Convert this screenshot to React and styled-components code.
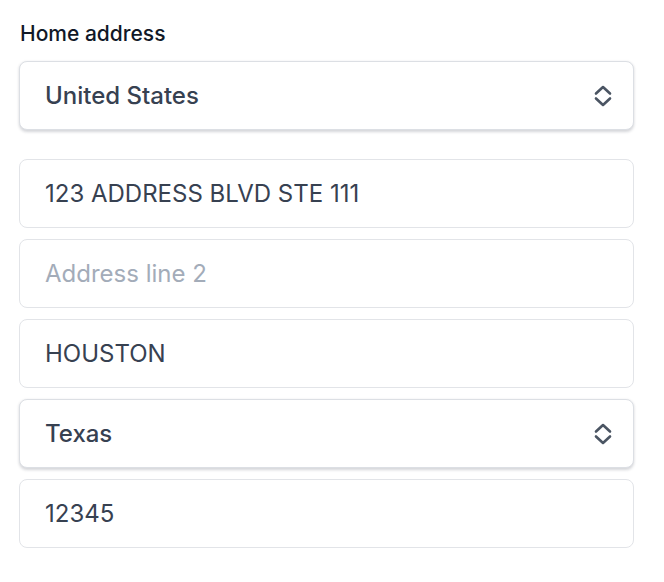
import styled, { createGlobalStyle } from 'styled-components';

const GlobalStyle = createGlobalStyle`
  body {
    margin: 0;
    background: #ffffff;
    font-family: Inter, "Noto Sans", "Liberation Sans", sans-serif;
  }
`;

function ChevronUpDown() {
  return (
    <svg width="18" height="22" viewBox="0 0 18 22" fill="none" stroke="#4b5563" strokeWidth="2.6" strokeLinecap="round" strokeLinejoin="round">
      <path d="M2 8.5 L9 2 L16 8.5" />
      <path d="M2 13.5 L9 20 L16 13.5" />
    </svg>
  );
}

function App() {
  return (
    <>
      <GlobalStyle />
      <Form>
        <Label>Home address</Label>
        <SelectWrap>
          <Select defaultValue="US">
            <option value="US">United States</option>
            <option value="CA">Canada</option>
          </Select>
          <Chevron>
            <ChevronUpDown />
          </Chevron>
        </SelectWrap>
        <Fields>
          <Input defaultValue="123 ADDRESS BLVD STE 111" />
          <Input placeholder="Address line 2" />
          <Input defaultValue="HOUSTON" />
          <SelectWrap>
            <Select defaultValue="TX">
              <option value="TX">Texas</option>
              <option value="CA">California</option>
            </Select>
            <Chevron>
              <ChevronUpDown />
            </Chevron>
          </SelectWrap>
          <Input defaultValue="12345" />
        </Fields>
      </Form>
    </>
  );
}

const Form = styled.div`
  width: 615px;
  padding: 20px 0 0 19px;
  display: flex;
  flex-direction: column;
`;

const Label = styled.label`
  font-size: 21px;
  font-weight: 500;
  color: #111827;
  line-height: 28px;
  margin-bottom: 13px;
  padding-left: 1px;
`;

const Fields = styled.div`
  display: flex;
  flex-direction: column;
  gap: 11px;
  margin-top: 29px;
`;

const SelectWrap = styled.div`
  position: relative;
  width: 100%;
`;

const Select = styled.select`
  appearance: none;
  -webkit-appearance: none;
  width: 100%;
  height: 69px;
  box-sizing: border-box;
  padding: 0 60px 0 25px;
  border: 1.5px solid #dcdfe4;
  border-radius: 8px;
  background: #ffffff;
  box-shadow: 0 1.5px 3px rgba(15, 23, 42, 0.18);
  font-family: inherit;
  font-size: 24px;
  font-weight: 500;
  color: #374151;
  outline: none;
`;

const Chevron = styled.span`
  position: absolute;
  right: 22px;
  top: 50%;
  transform: translateY(-50%);
  display: flex;
  pointer-events: none;
`;

const Input = styled.input`
  width: 100%;
  height: 69px;
  box-sizing: border-box;
  padding: 0 25px;
  border: 1.5px solid #e2e4e8;
  border-radius: 8px;
  background: #ffffff;
  font-family: inherit;
  font-size: 24px;
  font-weight: 400;
  color: #374151;
  outline: none;

  &::placeholder {
    color: #a3acb9;
  }
`;

export default App;
